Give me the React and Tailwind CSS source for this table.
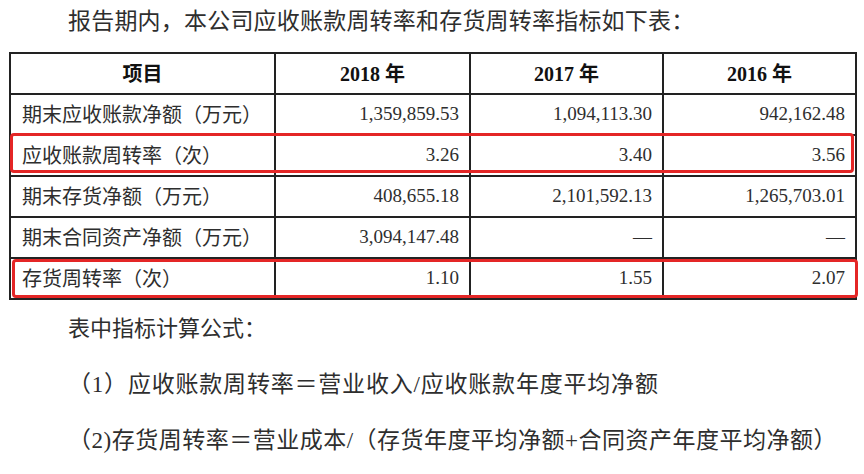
export default function App() {
  const font = { fontFamily: "'Liberation Serif', 'Noto Sans CJK SC', serif" };
  const rows = [
    ["期末应收账款净额（万元）", "1,359,859.53", "1,094,113.30", "942,162.48"],
    ["应收账款周转率（次）", "3.26", "3.40", "3.56"],
    ["期末存货净额（万元）", "408,655.18", "2,101,592.13", "1,265,703.01"],
    ["期末合同资产净额（万元）", "3,094,147.48", "—", "—"],
    ["存货周转率（次）", "1.10", "1.55", "2.07"],
  ];
  return (
    <div className="w-[864px] h-[474px] bg-white text-[#2e2e2e] overflow-hidden" style={font}>
      <div className="pl-[68px] pt-[7px] h-[52px] text-[23px] leading-[30px] tracking-[0.2px]">
        报告期内，本公司应收账款周转率和存货周转率指标如下表：
      </div>
      <div className="relative ml-[9px] w-[846px]">
        <table className="w-full border-collapse table-fixed">
          <colgroup>
            <col className="w-[265px]" />
            <col className="w-[195px]" />
            <col className="w-[193px]" />
            <col className="w-[193px]" />
          </colgroup>
          <thead>
            <tr className="h-[41px]">
              <th className="border-2 border-[#222] text-[20px] font-bold text-center text-[#111]">项目</th>
              <th className="border-2 border-[#222] text-[20px] font-bold text-center text-[#111]">2018 年</th>
              <th className="border-2 border-[#222] text-[20px] font-bold text-center text-[#111]">2017 年</th>
              <th className="border-2 border-[#222] text-[20px] font-bold text-center text-[#111]">2016 年</th>
            </tr>
          </thead>
          <tbody>
            {rows.map((r, i) => (
              <tr key={i} className="h-[41px]">
                <td className="border-2 border-[#222] pl-[11px] text-[20px] whitespace-nowrap">{r[0]}</td>
                <td className="border-2 border-[#222] pr-[10px] text-right text-[19px]">{r[1]}</td>
                <td className="border-2 border-[#222] pr-[10px] text-right text-[19px]">{r[2]}</td>
                <td className="border-2 border-[#222] pr-[10px] text-right text-[19px]">{r[3]}</td>
              </tr>
            ))}
          </tbody>
        </table>
        <div className="absolute left-[1px] top-[81px] w-[844px] h-[40px] border-[3px] border-[#e42626] rounded-[4px]" />
        <div className="absolute left-[3px] top-[207px] w-[846px] h-[39px] border-[3px] border-[#e42626] rounded-[4px]" />
      </div>
      <div className="pl-[68px] mt-[14px] text-[22px] leading-[30px]">表中指标计算公式：</div>
      <div className="pl-[68px] mt-[26px] text-[23px] leading-[30px] tracking-[0.8px] whitespace-nowrap">（1）应收账款周转率＝营业收入/应收账款年度平均净额</div>
      <div className="pl-[68px] mt-[26px] text-[23px] leading-[30px] tracking-[0.5px] whitespace-nowrap">（2)存货周转率＝营业成本/（存货年度平均净额+合同资产年度平均净额）</div>
    </div>
  );
}
